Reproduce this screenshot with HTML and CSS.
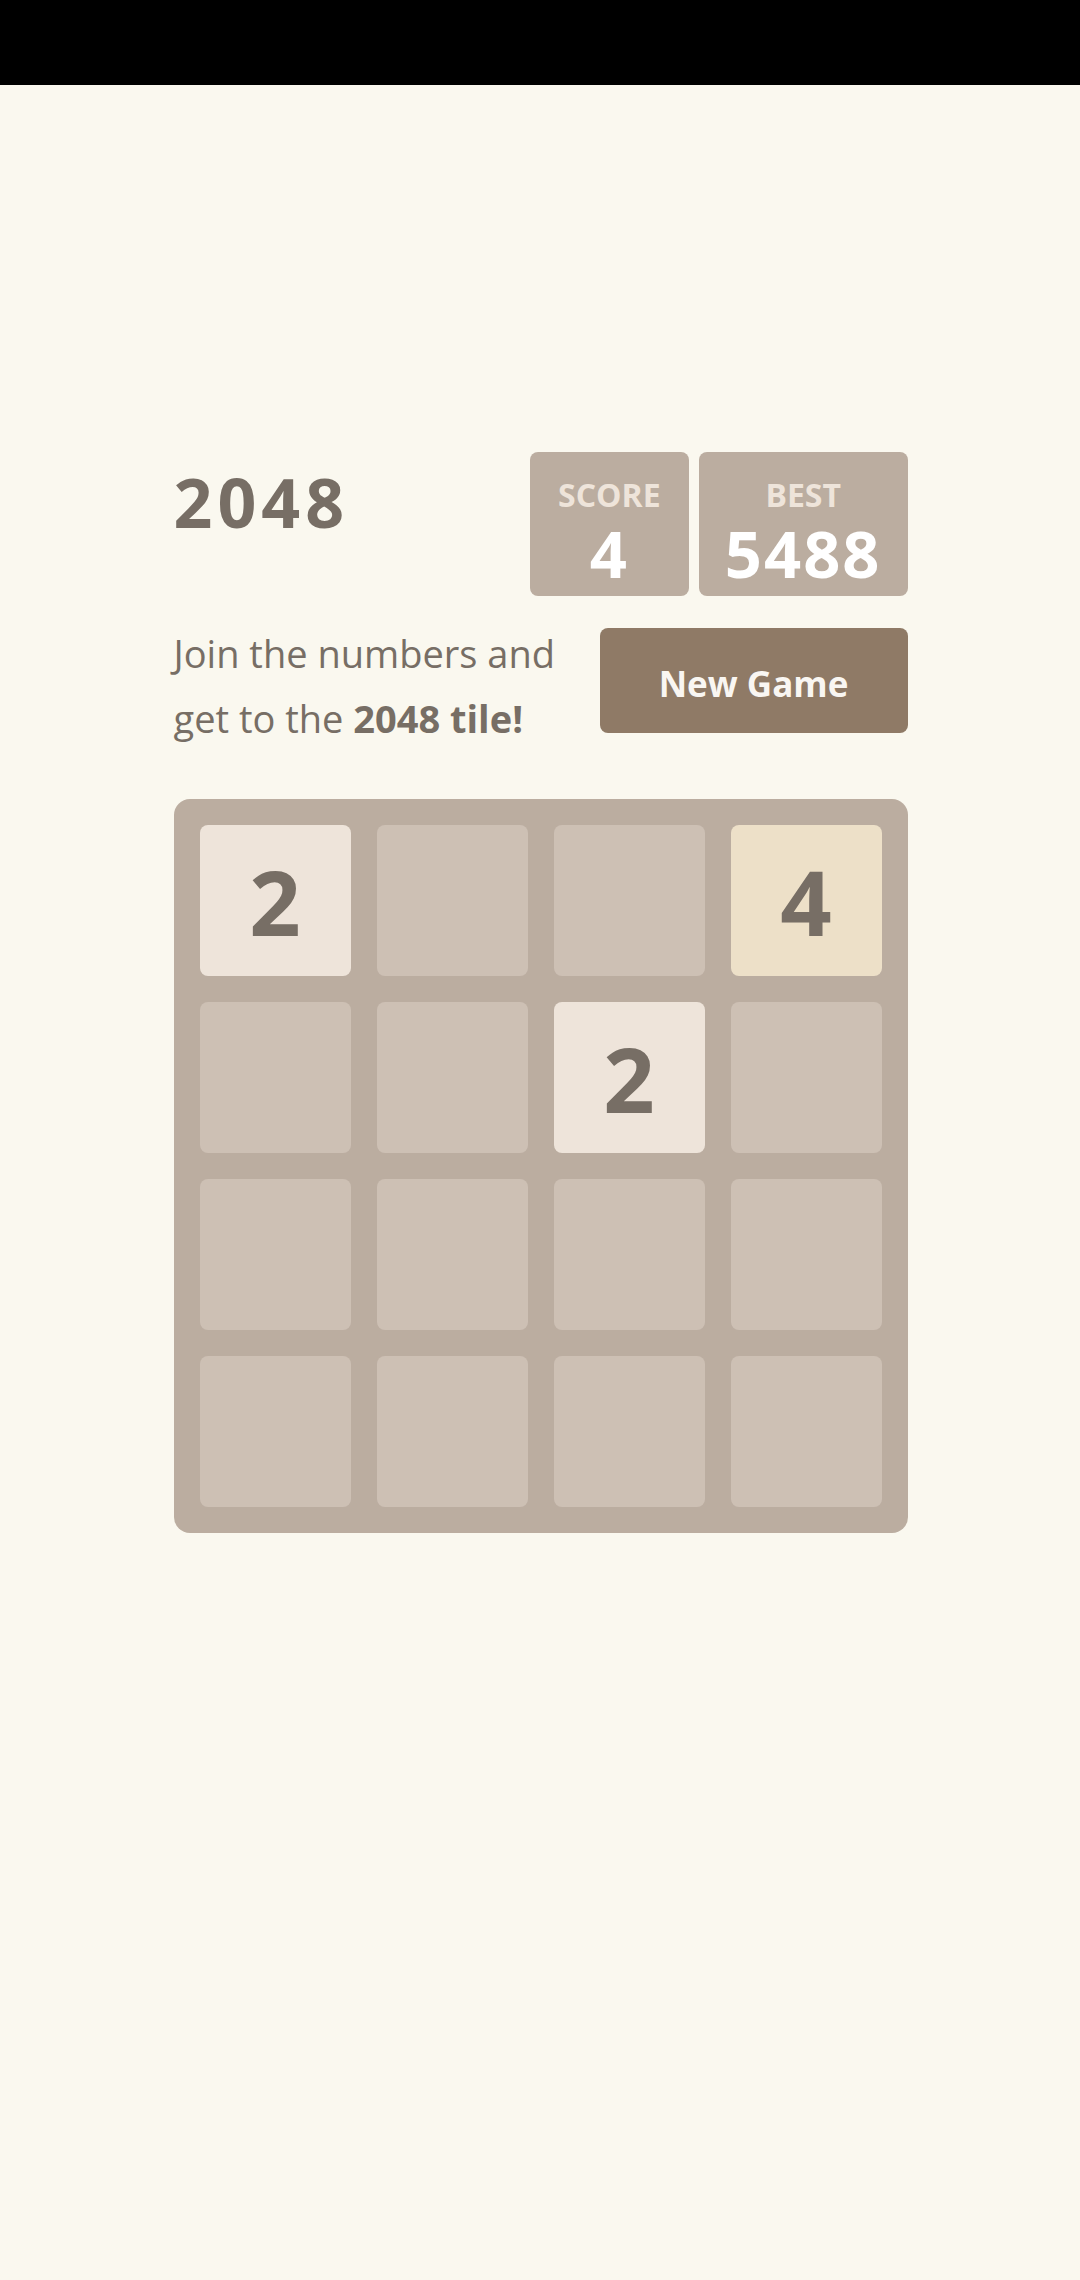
FILE: index.html
```html
<!DOCTYPE html>
<html lang="en">
<head>
    <meta charset="UTF-8">
    <meta name="viewport" content="width=device-width, initial-scale=1.0">
    <title>2048</title>
    <link rel="stylesheet" href="styles.css">
</head>
<body>
<div class="status-bar"></div>

<div class="container">
    <div class="heading">
        <h1 class="title">2048</h1>
        <div class="scores">
            <div class="score-box">
                <span class="score-label">Score</span>
                <span class="score-value">4</span>
            </div>
            <div class="score-box">
                <span class="score-label">Best</span>
                <span class="score-value">5488</span>
            </div>
        </div>
    </div>

    <div class="above-game">
        <p class="game-intro">Join the numbers and get to the <strong>2048 tile!</strong></p>
        <button class="restart-button" type="button">New Game</button>
    </div>

    <div class="game-grid">
        <div class="cell tile-2">2</div>
        <div class="cell"></div>
        <div class="cell"></div>
        <div class="cell tile-4">4</div>

        <div class="cell"></div>
        <div class="cell"></div>
        <div class="cell tile-2">2</div>
        <div class="cell"></div>

        <div class="cell"></div>
        <div class="cell"></div>
        <div class="cell"></div>
        <div class="cell"></div>

        <div class="cell"></div>
        <div class="cell"></div>
        <div class="cell"></div>
        <div class="cell"></div>
    </div>
</div>
</body>
</html>
```

FILE: styles.css
```css
body {
    margin: 0;
    padding: 0;
    background-color: #faf8ef;
    font-family: 'Open Sans', 'Noto Sans', sans-serif;
    color: #776e65;
}

.status-bar {
    height: 85px;
    background-color: #000000;
}

.container {
    width: 734px;
    margin: 0 auto;
    padding-left: 1px;
}

.heading {
    display: flex;
    justify-content: space-between;
    align-items: flex-start;
    margin-top: 367px;
}

.title {
    margin: 16px 0 0 0;
    font-size: 68px;
    line-height: 1;
    font-weight: bold;
    letter-spacing: 5px;
    color: #776e65;
}

.scores {
    display: flex;
    gap: 10px;
}

.score-box {
    display: flex;
    flex-direction: column;
    align-items: center;
    box-sizing: border-box;
    height: 144px;
    min-width: 159px;
    padding: 26px 26px 0 26px;
    background-color: #bbada0;
    border-radius: 8px;
    font-weight: bold;
}

.score-label {
    font-size: 32px;
    line-height: 34px;
    text-transform: uppercase;
    color: #eee4da;
}

.score-value {
    margin-top: 6px;
    font-size: 65px;
    line-height: 70px;
    letter-spacing: 2px;
    color: #ffffff;
}

.above-game {
    display: flex;
    justify-content: space-between;
    align-items: flex-start;
    margin-top: 25px;
}

.game-intro {
    width: 404px;
    margin: 0;
    font-size: 38px;
    line-height: 65px;
}

.restart-button {
    width: 308px;
    height: 105px;
    margin-top: 7px;
    padding: 0;
    border: none;
    border-radius: 8px;
    background-color: #8f7a66;
    color: #f9f6f2;
    font-family: 'Open Sans', 'Noto Sans', sans-serif;
    font-size: 35px;
    font-weight: bold;
    line-height: 111px;
    overflow: hidden;
    cursor: pointer;
}

.game-grid {
    display: grid;
    grid-template-columns: repeat(4, 151px);
    grid-auto-rows: 151px;
    gap: 26px;
    padding: 26px;
    margin-top: 48px;
    background-color: #bbada0;
    border-radius: 16px;
}

.cell {
    display: flex;
    align-items: center;
    justify-content: center;
    border-radius: 8px;
    background-color: #cdc0b4;
    font-size: 90px;
    font-weight: bold;
    line-height: 1;
    color: #776e65;
}

.tile-2 {
    background-color: #eee4da;
}

.tile-4 {
    background-color: #ede0c8;
}
```
